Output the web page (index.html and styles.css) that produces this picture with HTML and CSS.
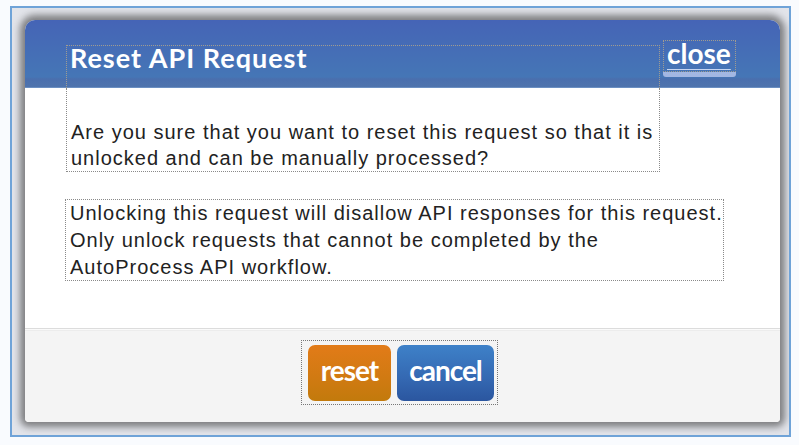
FILE: index.html
```html
<!DOCTYPE html>
<html>
<head>
<meta charset="utf-8">
<link rel="stylesheet" href="styles.css">
</head>
<body>
<div class="frame">
  <div class="dialog">
    <div class="header">
      <div class="title-box"><h1 class="title">Reset API Request</h1></div>
      <div class="close-wrap"><a class="close" href="#">close</a></div>
    </div>
    <div class="content">
      <p class="msg msg-first">Are you sure that you want to reset this request so that it is<br>unlocked and can be manually processed?</p>
      <p class="msg msg-note">Unlocking this request will disallow API responses for this request.<br>Only unlock requests that cannot be completed by the<br>AutoProcess API workflow.</p>
    </div>
    <div class="footer">
      <div class="btn-group">
        <button class="btn btn-reset">reset</button>
        <button class="btn btn-cancel">cancel</button>
      </div>
    </div>
  </div>
</div>
</body>
</html>
```
FILE: styles.css
```css
html, body {
  margin: 0;
  padding: 0;
  background: #f9fbfe;
}
body {
  font-family: "Liberation Sans", Arial, sans-serif;
  width: 799px;
  height: 445px;
  overflow: hidden;
}
.frame {
  box-sizing: border-box;
  margin: 6px 0 0 10px;
  width: 781px;
  height: 431px;
  border: 2px solid #6fa3d8;
  padding: 12px 8px 13px 13px;
  background: #e2e4ea;
  overflow: hidden;
}
.dialog {
  width: 755px;
  height: 402px;
  background: #fff;
  border-radius: 10px 10px 4px 4px;
  box-shadow: 0 0 7px 5px rgba(60, 60, 60, 0.6);
  display: flex;
  flex-direction: column;
  overflow: hidden;
}
.header {
  height: 68px;
  flex: none;
  box-sizing: border-box;
  display: flex;
  align-items: flex-start;
  padding-left: 41px;
  background: linear-gradient(#4564b6, #4576b6 85%, #4a6fae 88%, #4f74ad);
  border-bottom: 1px solid #6b8fc2;
}
.title-box {
  box-sizing: border-box;
  width: 594px;
  height: 43px;
  margin-top: 25px;
  border: 1px dotted #a09c90;
  border-bottom: none;
  padding: 0 0 0 3px;
}
.title {
  margin: 0;
  font-family: Lato, "Open Sans", sans-serif;
  font-weight: 700;
  font-size: 27px;
  line-height: 24px;
  color: #fff;
  letter-spacing: 1px;
}
.close-wrap {
  margin: 20px 0 0 3px;
  border-bottom: 5px solid #a2b7e3;
  border-radius: 0 0 3px 3px;
}
.close {
  display: block;
  box-sizing: border-box;
  width: 73px;
  height: 32px;
  border: 1px dotted #a09c90;
  padding-left: 3px;
  font-family: Lato, "Open Sans", sans-serif;
  font-weight: 700;
  font-size: 28px;
  line-height: 24px;
  color: #fff;
  text-decoration: underline;
  text-decoration-thickness: 1px;
  text-underline-offset: 5px;
  text-decoration-color: #c8d6f2;
}
.content {
  flex: 1;
  padding-left: 40px;
  color: #222;
}
.msg {
  margin: 0;
  font-size: 20px;
  letter-spacing: 1px;
  white-space: nowrap;
  box-sizing: border-box;
  border: 1px dotted #8a8a8a;
}
.msg-first {
  margin-left: 1px;
  width: 594px;
  border-top: none;
  padding: 31px 0 0 4px;
  line-height: 26px;
  height: 84px;
}
.msg-note {
  margin-top: 27px;
  width: 659px;
  padding: 0 0 0 4px;
  line-height: 27px;
  height: 82px;
}
.footer {
  height: 94px;
  flex: none;
  box-sizing: border-box;
  background: #f4f4f4;
  border-top: 1px solid #dcdcdc;
  box-shadow: inset 0 1px 0 #fafafa, inset 0 2px 0 #ececec;
  display: flex;
  justify-content: center;
  align-items: flex-start;
  padding: 11px 6px 0 0;
}
.btn-group {
  display: flex;
  gap: 6px;
  border: 1px dotted #777;
  padding: 4px 3px 3px 6px;
}
.btn {
  height: 56px;
  border: none;
  border-radius: 7px;
  color: #fff;
  font-family: Lato, "Open Sans", sans-serif;
  font-weight: 700;
  font-size: 28px;
  letter-spacing: -1px;
  padding: 0 0 6px;
  cursor: pointer;
}
.btn-reset {
  width: 83px;
  background: linear-gradient(#e27b18, #d07a12 60%, #c27a0c);
}
.btn-cancel {
  width: 97px;
  background: linear-gradient(#3e81c8, #3468b2 60%, #2b569f);
}
```
